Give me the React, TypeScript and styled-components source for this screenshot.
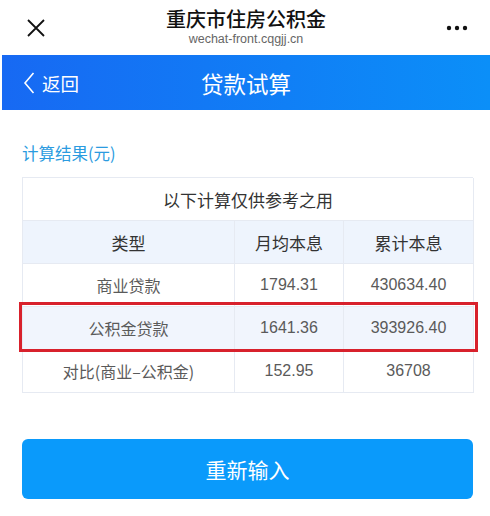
import styled, { createGlobalStyle } from 'styled-components';

const Global = createGlobalStyle`
    body {
        margin: 0;
        background: #fff;
        font-family: "Noto Sans CJK SC", "Noto Sans", sans-serif;
    }
`

const Page = styled.div`
    width: 490px;
    height: 516px;
    overflow: hidden;
    background: #fff;
`

const TopBar = styled.div`
    height: 55px;
    display: flex;
    align-items: center;
    justify-content: space-between;
    padding: 0 22px 0 26px;
    box-sizing: border-box;
`

const TitleBox = styled.div`
    display: flex;
    flex-direction: column;
    align-items: center;
    padding-bottom: 4px;

    h1 {
        margin: 0;
        font-size: 20px;
        line-height: 26px;
        font-weight: 500;
        color: #111;
    }

    span {
        font-family: "Liberation Sans", sans-serif;
        font-size: 12.5px;
        line-height: 14px;
        color: #666;
    }
`

const NavBar = styled.div`
    height: 55px;
    margin-left: 2px;
    background: linear-gradient(90deg, #1769f3 0%, #0b8ff8 100%);
    display: flex;
    align-items: center;
    position: relative;
    color: #fff;
`

const Back = styled.div`
    display: flex;
    align-items: center;
    gap: 7px;
    padding-left: 21px;
    font-size: 18.5px;
`

const NavTitle = styled.div`
    position: absolute;
    left: 0;
    right: 0;
    text-align: center;
    font-size: 22.5px;
    pointer-events: none;
`

const Content = styled.div`
    padding: 32px 17px 0 22px;
`

const SectionTitle = styled.div`
    font-size: 16.5px;
    line-height: 22px;
    color: #2b9be0;
    margin-bottom: 13px;
`

const TableWrap = styled.div`
    position: relative;
`

const Table = styled.div`
    display: grid;
    grid-template-columns: 212px 109px 130px;
    border-top: 1px solid #e6eaf2;
    border-left: 1px solid #e6eaf2;
`

const Caption = styled.div`
    grid-column: 1 / 4;
    height: 42px;
    display: flex;
    align-items: center;
    justify-content: center;
    font-size: 17px;
    color: #333;
    border-right: 1px solid #e6eaf2;
    border-bottom: 1px solid #e6eaf2;
`

const Cell = styled.div<{ head?: boolean; shaded?: boolean; num?: boolean }>`
    height: 42px;
    display: flex;
    align-items: center;
    justify-content: center;
    font-size: ${p => (p.head ? 17 : 16)}px;
    color: ${p => (p.head ? '#333' : '#5a5a5a')};
    background: ${p => (p.head ? '#eef4fd' : p.shaded ? '#f1f5fd' : '#fff')};
    border-right: 1px solid #e6eaf2;
    border-bottom: 1px solid #e6eaf2;
    font-family: ${p => (p.num ? '"Liberation Sans", "Noto Sans CJK SC", sans-serif' : 'inherit')};
    font-weight: ${p => (p.num ? 300 : 400)};
`

const Highlight = styled.div`
    position: absolute;
    left: -3px;
    right: -5px;
    top: 125px;
    height: 50px;
    border: 3px solid #d8212c;
    box-sizing: border-box;
    pointer-events: none;
`

const Button = styled.div`
    margin-top: 46px;
    width: 451px;
    height: 60px;
    border-radius: 6px;
    background: #0a9afb;
    color: #fff;
    font-size: 21px;
    display: flex;
    align-items: center;
    justify-content: center;
`

const rows = [
    { name: '商业贷款', month: '1794.31', total: '430634.40' },
    { name: '公积金贷款', month: '1641.36', total: '393926.40', shaded: true },
    { name: '对比(商业–公积金)', month: '152.95', total: '36708' },
]

export default function App() {
    return (
        <Page>
            <Global />
            <TopBar>
                <svg width="20" height="20" viewBox="0 0 20 20">
                    <path d="M2 2 L18 18 M18 2 L2 18" stroke="#111" strokeWidth="1.8" fill="none" />
                </svg>
                <TitleBox>
                    <h1>重庆市住房公积金</h1>
                    <span>wechat-front.cqgjj.cn</span>
                </TitleBox>
                <svg width="22" height="6" viewBox="0 0 22 6">
                    <circle cx="3" cy="3" r="2.2" fill="#111" />
                    <circle cx="11" cy="3" r="2.2" fill="#111" />
                    <circle cx="19" cy="3" r="2.2" fill="#111" />
                </svg>
            </TopBar>
            <NavBar>
                <Back>
                    <svg width="12" height="22" viewBox="0 0 12 22">
                        <path d="M10.5 1 L2 11 L10.5 21" stroke="#fff" strokeWidth="1.6" fill="none" />
                    </svg>
                    返回
                </Back>
                <NavTitle>贷款试算</NavTitle>
            </NavBar>
            <Content>
                <SectionTitle>计算结果(元)</SectionTitle>
                <TableWrap>
                    <Table>
                        <Caption>以下计算仅供参考之用</Caption>
                        <Cell head>类型</Cell>
                        <Cell head>月均本息</Cell>
                        <Cell head>累计本息</Cell>
                        {rows.map(r => [
                            <Cell key={r.name} shaded={r.shaded}>{r.name}</Cell>,
                            <Cell key={r.name + 'm'} shaded={r.shaded} num>{r.month}</Cell>,
                            <Cell key={r.name + 't'} shaded={r.shaded} num>{r.total}</Cell>,
                        ])}
                    </Table>
                    <Highlight />
                </TableWrap>
                <Button>重新输入</Button>
            </Content>
        </Page>
    )
}
